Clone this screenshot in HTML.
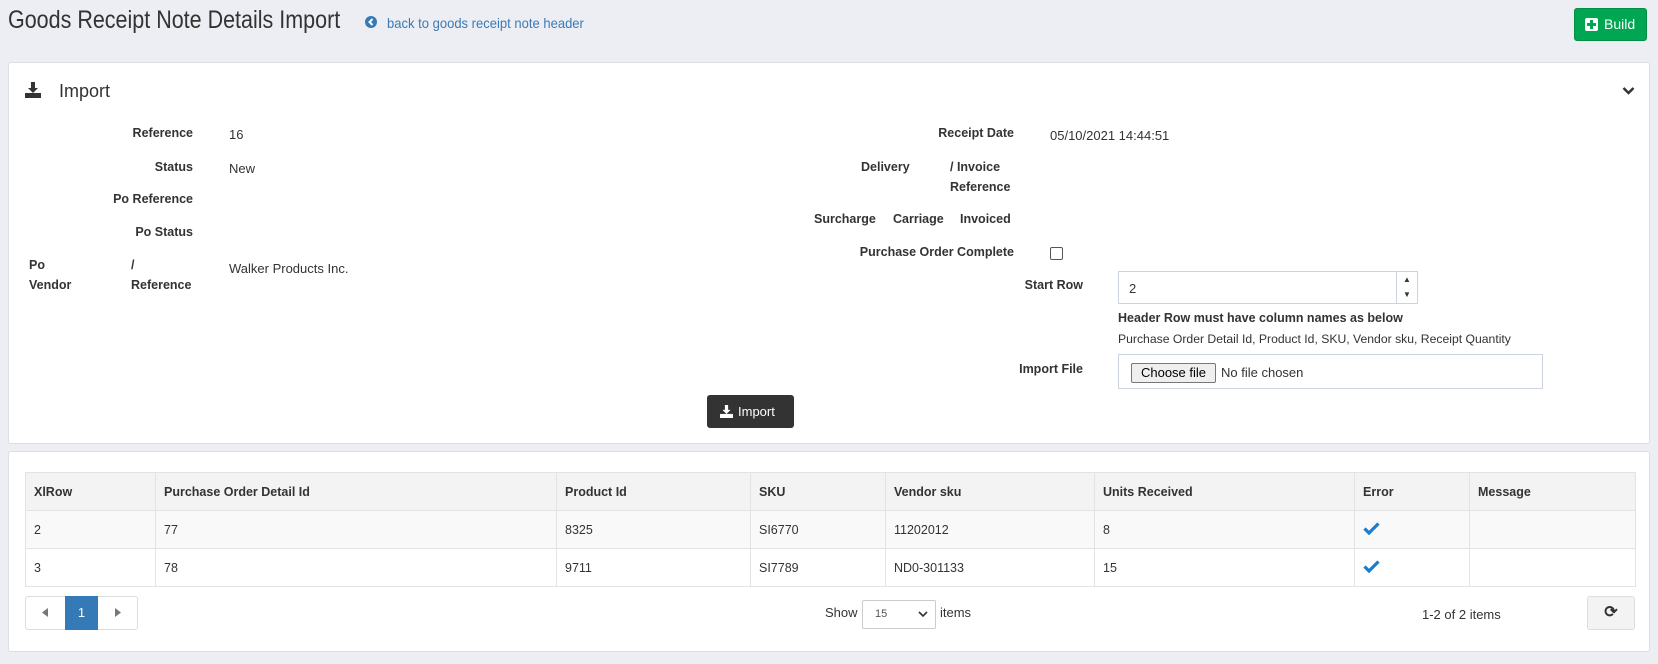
<!DOCTYPE html>
<html><head><meta charset="utf-8"><style>
*{box-sizing:border-box;margin:0;padding:0}
body{width:1658px;height:664px;background:#eceef3;font-family:"Liberation Sans",sans-serif;color:#333;font-size:13px;position:relative;overflow:hidden}
.a{position:absolute;white-space:nowrap}
.card{position:absolute;background:#fff;border:1px solid #dcdfe4;border-radius:3px}
.lb{font-weight:bold;font-size:12.5px;color:#333}
.r{text-align:right}
table{position:absolute;left:25px;top:472px;width:1611px;border-collapse:collapse;font-size:12.5px}
td,th{border:1px solid #e3e3e3;text-align:left;padding:0 8px;height:38px;font-weight:normal}
th{background:#f3f3f3;font-weight:bold}
tr.o td{background:#f9f9f9}
</style></head><body>
<div class="a" style="left:8px;top:6px;font-size:25px;color:#333;transform:scaleX(0.86);transform-origin:0 0">Goods Receipt Note Details Import</div>
<svg class="a" style="left:365px;top:16px" width="12" height="12" viewBox="0 0 12 12"><circle cx="6" cy="6" r="6" fill="#337ab7"/><path d="M7.5 3 4.5 6 7.5 9" stroke="#fff" stroke-width="2" fill="none"/></svg>
<div class="a" style="left:387px;top:15px;font-size:14px;color:#3c7ab5;transform:scaleX(0.93);transform-origin:0 0">back to goods receipt note header</div>
<div class="a" style="left:1574px;top:8px;width:73px;height:33px;background:#00a651;border:1px solid #008f45;border-radius:3px;color:#fff;font-size:14px;line-height:31px;padding-left:10px"><span style="display:inline-block;width:13px;height:13px;background:#fff;border-radius:2px;vertical-align:-2px;position:relative;margin-right:6px"><span style="position:absolute;left:5px;top:2px;width:3px;height:9px;background:#00a651"></span><span style="position:absolute;left:2px;top:5px;width:9px;height:3px;background:#00a651"></span></span>Build</div>

<div class="card" style="left:8px;top:62px;width:1642px;height:382px"></div>
<svg class="a" style="left:25px;top:82px" width="16" height="16" viewBox="0 0 16 16"><path d="M6 0h4v6h3l-5 5-5-5h3z" fill="#333"/><rect x="0" y="11" width="16" height="5" fill="#333"/></svg>
<div class="a" style="left:59px;top:81px;font-size:18px;color:#333">Import</div>
<svg class="a" style="left:1622px;top:86px" width="13" height="10" viewBox="0 0 13 10"><path d="M1.5 2 6.5 7 11.5 2" stroke="#333" stroke-width="2.5" fill="none"/></svg>

<div class="a lb r" style="left:93px;width:100px;top:126px">Reference</div>
<div class="a" style="left:229px;top:127px">16</div>
<div class="a lb r" style="left:93px;width:100px;top:160px">Status</div>
<div class="a" style="left:229px;top:161px">New</div>
<div class="a lb r" style="left:93px;width:100px;top:192px">Po Reference</div>
<div class="a lb r" style="left:93px;width:100px;top:225px">Po Status</div>
<div class="a lb" style="left:29px;top:258px">Po</div>
<div class="a lb" style="left:29px;top:278px">Vendor</div>
<div class="a lb" style="left:131px;top:258px">/</div>
<div class="a lb" style="left:131px;top:278px">Reference</div>
<div class="a" style="left:229px;top:261px">Walker Products Inc.</div>

<div class="a lb r" style="left:814px;width:200px;top:126px">Receipt Date</div>
<div class="a" style="left:1050px;top:128px">05/10/2021 14:44:51</div>
<div class="a lb" style="left:861px;top:160px">Delivery</div>
<div class="a lb" style="left:950px;top:160px">/ Invoice</div>
<div class="a lb" style="left:950px;top:180px">Reference</div>
<div class="a lb" style="left:814px;top:212px">Surcharge</div>
<div class="a lb" style="left:893px;top:212px">Carriage</div>
<div class="a lb" style="left:960px;top:212px">Invoiced</div>
<div class="a lb r" style="left:814px;width:200px;top:245px">Purchase Order Complete</div>
<div class="a" style="left:1050px;top:247px;width:13px;height:13px;border:1px solid #555;border-radius:2px"></div>
<div class="a lb r" style="left:983px;width:100px;top:278px">Start Row</div>
<div class="a" style="left:1118px;top:271px;width:300px;height:33px;border:1px solid #ccd3de"><span style="position:absolute;left:10px;top:9px">2</span><div style="position:absolute;right:0;top:0;width:21px;height:31px;border-left:1px solid #ccd3de;font-size:8px;text-align:center;line-height:15px">▲<br>▼</div></div>
<div class="a lb" style="left:1118px;top:311px">Header Row must have column names as below</div>
<div class="a" style="left:1118px;top:332px;font-size:12.2px">Purchase Order Detail Id, Product Id, SKU, Vendor sku, Receipt Quantity</div>
<div class="a lb r" style="left:983px;width:100px;top:362px">Import File</div>
<div class="a" style="left:1118px;top:354px;width:425px;height:35px;border:1px solid #ccd3de"><span style="position:absolute;left:12px;top:8px;height:20px;width:85px;border:1px solid #777;border-radius:2px;background:#efefef;font-size:13px;line-height:18px;text-align:center;color:#000">Choose file</span><span style="position:absolute;left:102px;top:10px;color:#333">No file chosen</span></div>
<div class="a" style="left:707px;top:395px;width:87px;height:33px;background:#333;border-radius:3px;color:#fff;font-size:13px;line-height:33px;padding-left:13px"><svg width="13" height="13" viewBox="0 0 16 16" style="vertical-align:-2px;margin-right:5px"><path d="M6 0h4v6h3l-5 5-5-5h3z" fill="#fff"/><rect x="0" y="11" width="16" height="5" fill="#fff"/></svg>Import</div>

<div class="card" style="left:8px;top:451px;width:1642px;height:201px"></div>
<table>
<tr><th style="width:130px">XlRow</th><th style="width:401px">Purchase Order Detail Id</th><th style="width:194px">Product Id</th><th style="width:135px">SKU</th><th style="width:209px">Vendor sku</th><th style="width:260px">Units Received</th><th style="width:115px">Error</th><th>Message</th></tr>
<tr class="o"><td>2</td><td>77</td><td>8325</td><td>SI6770</td><td>11202012</td><td>8</td><td><svg width="17" height="13" viewBox="0 0 17 13"><path d="M1.5 6.5 6 11 15.5 1.5" stroke="#1a7ccc" stroke-width="3.2" fill="none"/></svg></td><td></td></tr>
<tr><td>3</td><td>78</td><td>9711</td><td>SI7789</td><td>ND0-301133</td><td>15</td><td><svg width="17" height="13" viewBox="0 0 17 13"><path d="M1.5 6.5 6 11 15.5 1.5" stroke="#1a7ccc" stroke-width="3.2" fill="none"/></svg></td><td></td></tr>
</table>
<div class="a" style="left:25px;top:596px;width:113px;height:34px;border:1px solid #ddd;border-radius:3px"></div>
<svg class="a" style="left:42px;top:608px" width="6" height="9" viewBox="0 0 6 9"><path d="M6 0V9L0 4.5z" fill="#777"/></svg>
<div class="a" style="left:65px;top:596px;width:33px;height:34px;background:#337ab7;color:#fff;text-align:center;line-height:34px;font-size:13px">1</div>
<svg class="a" style="left:115px;top:608px" width="6" height="9" viewBox="0 0 6 9"><path d="M0 0V9L6 4.5z" fill="#777"/></svg>
<div class="a" style="left:825px;top:605px">Show</div>
<div class="a" style="left:862px;top:600px;width:74px;height:29px;border:1px solid #ccc;border-radius:2px;font-size:11px;line-height:27px;padding-left:12px;color:#555">15<svg style="position:absolute;right:7px;top:10px" width="10" height="7" viewBox="0 0 10 7"><path d="M1 1 5 5 9 1" stroke="#333" stroke-width="1.6" fill="none"/></svg></div>
<div class="a" style="left:940px;top:605px">items</div>
<div class="a" style="left:1422px;top:607px">1-2 of 2 items</div>
<div class="a" style="left:1587px;top:596px;width:48px;height:34px;background:#f3f3f3;border:1px solid #ddd;border-radius:3px;text-align:center;line-height:32px;font-size:16px;font-weight:bold;color:#333">⟳</div>
</body></html>
